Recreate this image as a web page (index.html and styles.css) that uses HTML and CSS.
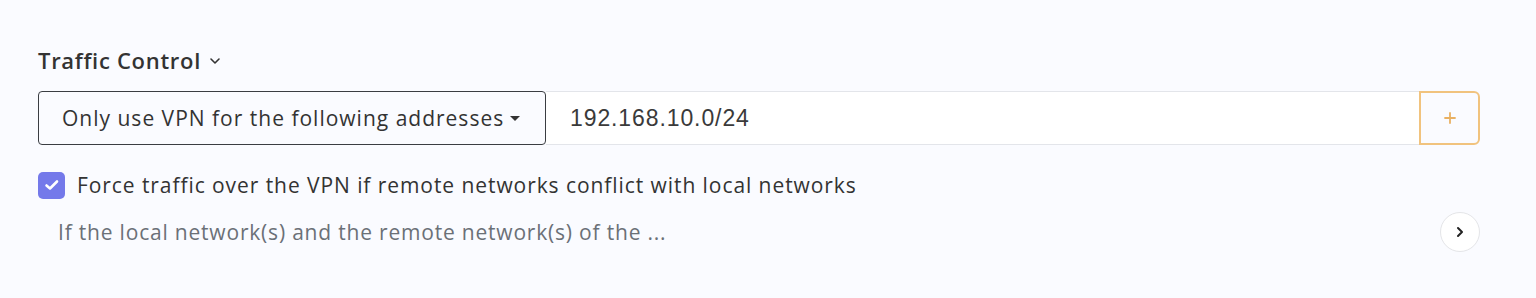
FILE: index.html
```html
<!DOCTYPE html>
<html>
<head>
<meta charset="utf-8">
<link rel="stylesheet" href="styles.css">
</head>
<body>
<div class="panel">
  <div class="title">Traffic Control
    <svg class="chev" width="12" height="8" viewBox="0 0 12 8"><path d="M2 2 L6 6 L10 2" fill="none" stroke="#333" stroke-width="1.6" stroke-linecap="round" stroke-linejoin="round"/></svg>
  </div>
  <div class="row">
    <div class="select">Only use VPN for the following addresses
      <svg class="caret" width="10" height="6" viewBox="0 0 10 6"><path d="M0 0 L10 0 L5 5 Z" fill="#333"/></svg>
    </div>
    <div class="input">192.168.10.0/24</div>
    <div class="plus"><svg width="12" height="12" viewBox="0 0 12 12"><path d="M6 1 V11 M1 6 H11" fill="none" stroke="#e9b163" stroke-width="1.8" stroke-linecap="round"/></svg></div>
  </div>
  <div class="check-row">
    <span class="box"><svg width="16" height="12" viewBox="0 0 16 12"><path d="M2.5 6.5 L6 9.5 L13 2.5" fill="none" stroke="#fff" stroke-width="2.6" stroke-linecap="round" stroke-linejoin="round"/></svg></span>
    <span class="label">Force traffic over the VPN if remote networks conflict with local networks</span>
  </div>
  <div class="help-row">
    <span class="help">If the local network(s) and the remote network(s) of the ...</span>
    <span class="circle"><svg width="10" height="12" viewBox="0 0 10 12"><path d="M3 2 L7 6 L3 10" fill="none" stroke="#222" stroke-width="2" stroke-linecap="round" stroke-linejoin="round"/></svg></span>
  </div>
</div>
</body>
</html>
```
FILE: styles.css
```css
html, body { margin: 0; padding: 0; }
body { background: #fafbff; font-family: "Open Sans", Lato, sans-serif; color: #333; width: 1536px; height: 298px; overflow: hidden; }
.panel { padding: 45px 56px 0 38px; }
.title { font-size: 22px; font-weight: 600; letter-spacing: 0.7px; color: #333; display: flex; align-items: center; gap: 8px; height: 30px; }
.chev { margin-top: 2px; }
.row { display: flex; margin-top: 16px; height: 54px; }
.select { width: 508px; box-sizing: border-box; border: 1.5px solid #3a3d42; border-radius: 4px; background: #fafbff; display: flex; align-items: center; padding-left: 23px; font-size: 21px; letter-spacing: 1px; color: #333; gap: 6px; }
.caret { margin-top: 1px; }
.input { flex: 1; background: #fff; border-top: 1px solid #e3e5ea; border-bottom: 1px solid #e3e5ea; display: flex; align-items: center; padding-left: 24px; font-family: "Liberation Sans", Arial, sans-serif; font-size: 23px; letter-spacing: 0.9px; color: #3a3a3a; }
.plus { width: 61px; box-sizing: border-box; border: 2px solid #f1c37e; border-radius: 0 6px 6px 0; display: flex; align-items: center; justify-content: center; }
.check-row { display: flex; align-items: center; margin-top: 26px; gap: 12px; }
.box { width: 27px; height: 27px; border-radius: 5px; background: #7479ea; display: flex; align-items: center; justify-content: center; }
.label { font-size: 21px; letter-spacing: 0.93px; color: #333; }
.help-row { display: flex; align-items: center; justify-content: space-between; margin-top: 13px; padding-left: 20px; }
.help { font-size: 21px; letter-spacing: 0.8px; color: #6b7077; }
.circle { width: 40px; height: 40px; box-sizing: border-box; border: 1.5px solid #e4e5e8; border-radius: 50%; display: flex; align-items: center; justify-content: center; background: #fff; }
```
